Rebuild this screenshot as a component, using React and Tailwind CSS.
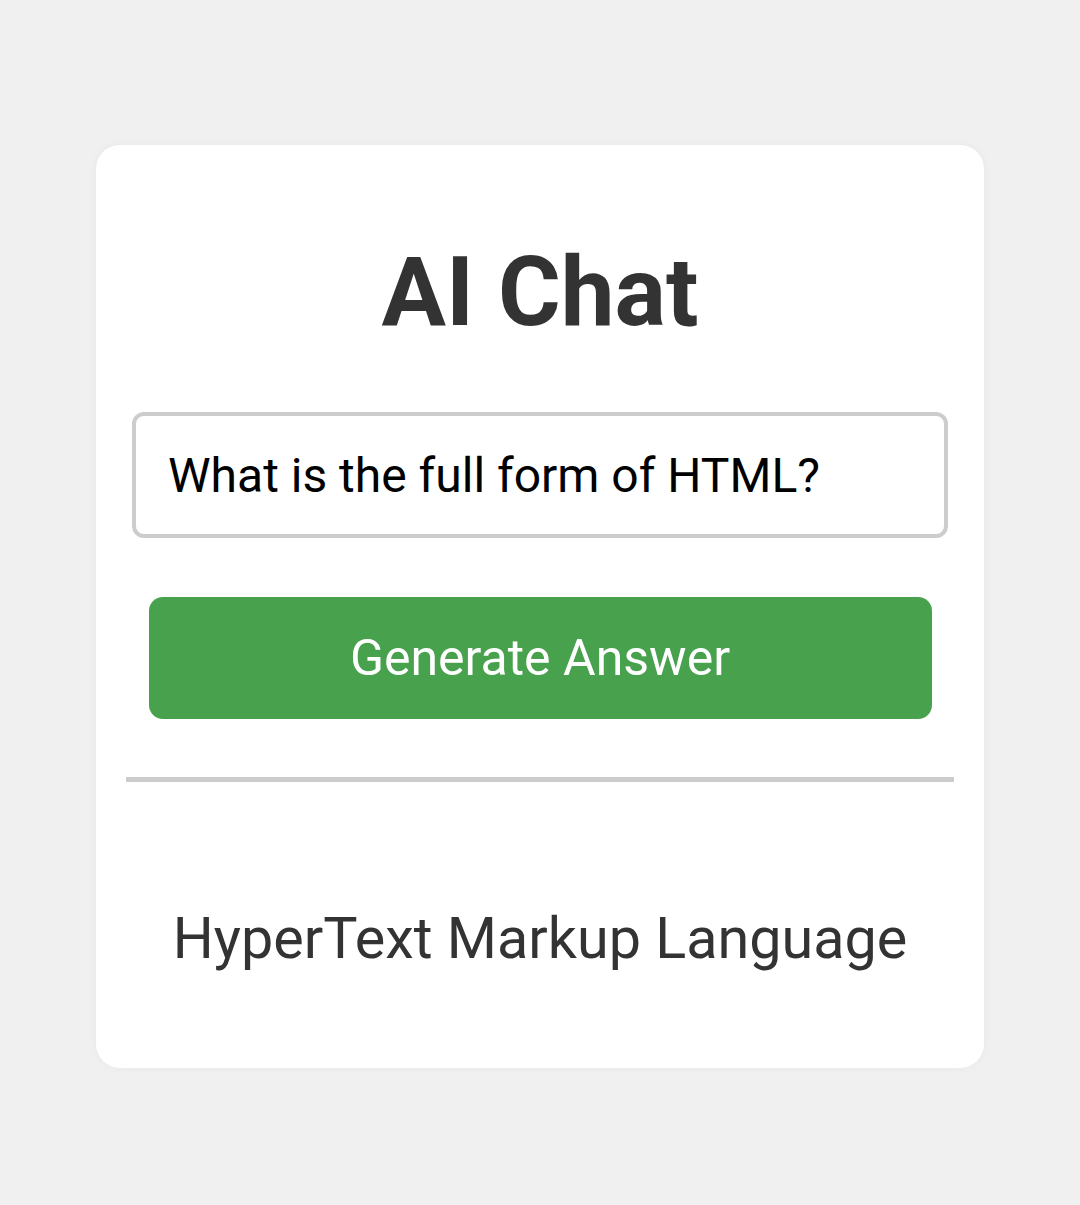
import React, { useState } from 'react';

export default function App() {
  const [question, setQuestion] = useState('What is the full form of HTML?');
  const [answer] = useState('HyperText Markup Language');

  return (
    <div className="min-h-[1205px] bg-[#f0f0f0] pt-[145px] font-['Roboto',sans-serif]">
      {/* Card */}
      <div className="mx-auto flex w-[888px] flex-col items-center rounded-[24px] bg-white pt-[99px] pb-[100px] shadow-[0_0_8px_rgba(0,0,0,0.04)]">
        <h1 className="text-[96px] leading-none font-bold text-[#333333]">AI Chat</h1>

        <input
          type="text"
          value={question}
          onChange={(e) => setQuestion(e.target.value)}
          className="mt-[72px] h-[126px] w-[816px] rounded-[12px] border-4 border-[#cccccc] bg-white px-[32px] text-[48px] text-black outline-none"
        />

        <button className="mt-[59px] h-[122px] w-[783px] rounded-[14px] bg-[#48a14d] text-[50px] text-white">
          Generate Answer
        </button>

        <div className="mt-[58px] h-[5px] w-[828px] bg-[#cccccc]" />

        <p className="mt-[128px] text-[57.5px] leading-none text-[#333333]">{answer}</p>
      </div>
    </div>
  );
}
